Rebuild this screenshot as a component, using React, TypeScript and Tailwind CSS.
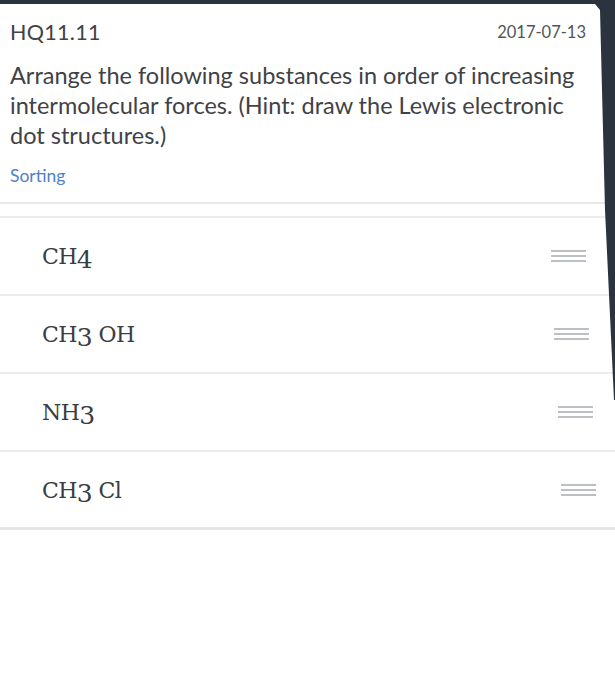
import React from "react";

const items: { base: string[]; shift: string }[] = [
  { base: ["CH", "4", ""], shift: "mr-[29px]" },
  { base: ["CH", "3", " OH"], shift: "mr-[26px]" },
  { base: ["NH", "3", ""], shift: "mr-[22px]" },
  { base: ["CH", "3", " Cl"], shift: "mr-[19px]" },
];

function Handle() {
  return (
    <div className="flex flex-col gap-[3px] w-[35px]">
      <div className="h-[2px] bg-[#bcbfc3]" />
      <div className="h-[2px] bg-[#bcbfc3]" />
      <div className="h-[2px] bg-[#bcbfc3]" />
    </div>
  );
}

export default function App() {
  return (
    <div className="relative w-[615px] h-[700px] bg-white overflow-hidden font-['Lato',sans-serif]">
      <div className="h-[4px] bg-[#2b343e]" />
      <div className="px-[10px]">
        <div className="flex items-center justify-between pt-[13px] h-[44px]">
          <span className="text-[21.5px] text-[#3f4246] tracking-[0.3px]">HQ11.11</span>
          <span className="text-[16.5px] text-[#50555a] mr-[19px]">2017-07-13</span>
        </div>
        <p className="mt-[12px] w-[580px] text-[23.5px] leading-[30px] text-[#3f4246]">
          Arrange the following substances in order of increasing intermolecular forces. (Hint: draw the Lewis electronic dot structures.)
        </p>
        <div className="mt-[15px] text-[17.5px] leading-[22px] text-[#4d81c8]">Sorting</div>
      </div>
      <div className="mt-[15px] border-t-2 border-[#e8e8e8]" />
      <div className="mt-[12px] border-t-2 border-[#ececec]">
        {items.map((it, i) => (
          <div
            key={i}
            className={
              "flex items-center justify-between h-[78px] pl-[42px] " +
              (i === items.length - 1 ? "border-b-[3px] border-[#e6e6e6]" : "border-b-2 border-[#ececec]")
            }
          >
            <span className="font-['DejaVu_Serif','Liberation_Serif',serif] text-[22px] text-[#3a3d42] tracking-[-0.6px]">
              {it.base[0]}
              <span className="relative top-[4px] text-[25px]">{it.base[1]}</span>
              {it.base[2]}
            </span>
            <div className={it.shift}>
              <Handle />
            </div>
          </div>
        ))}
      </div>
      <svg className="absolute top-0 right-0" width="20" height="400" viewBox="0 0 20 400">
        <polygon points="0,0 20,0 20,400 19,400 10,210 5,10 0,4" fill="#2b343e" />
      </svg>
    </div>
  );
}
